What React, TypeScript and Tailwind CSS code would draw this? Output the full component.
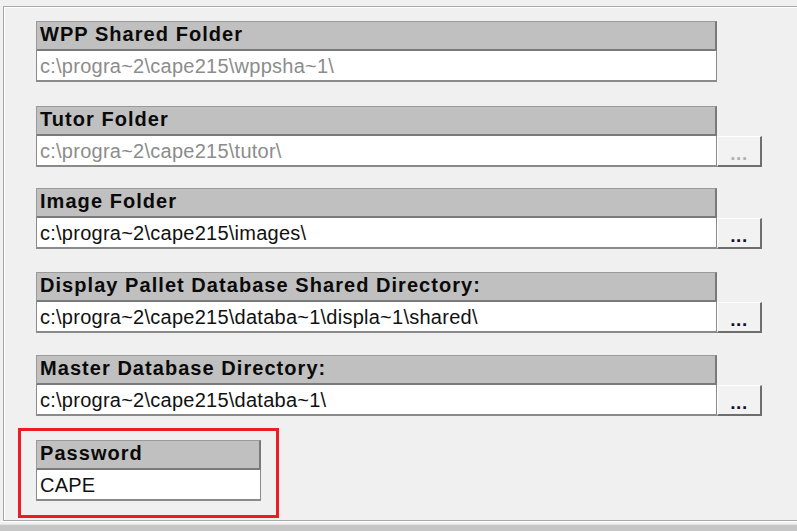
import React from 'react';

type Field = {
  label: string;
  value: string;
  disabled?: boolean;
  browse?: 'none' | 'on' | 'off';
  mt: string;
};

const fields: Field[] = [
  { label: 'WPP Shared Folder', value: 'c:\\progra~2\\cape215\\wppsha~1\\', disabled: true, browse: 'none', mt: 'mt-[13px]' },
  { label: 'Tutor Folder', value: 'c:\\progra~2\\cape215\\tutor\\', disabled: true, browse: 'off', mt: 'mt-[24px]' },
  { label: 'Image Folder', value: 'c:\\progra~2\\cape215\\images\\', browse: 'on', mt: 'mt-[21px]' },
  { label: 'Display Pallet Database Shared Directory:', value: 'c:\\progra~2\\cape215\\databa~1\\displa~1\\shared\\', browse: 'on', mt: 'mt-[23px]' },
  { label: 'Master Database Directory:', value: 'c:\\progra~2\\cape215\\databa~1\\', browse: 'on', mt: 'mt-[22px]' },
];

const Label: React.FC<{ text: string; width: string }> = ({ text, width }) => (
  <div
    className={`${width} h-[30px] flex items-center pl-[3px] pb-[3px] bg-[#c0c0c0] border-t border-l border-[#9a9a9a] border-r-2 border-b-2 border-r-[#7a7a7a] border-b-[#7a7a7a] text-[20px] font-bold tracking-[1.05px] text-[#0a0a0a] whitespace-nowrap`}
  >
    {text}
  </div>
);

const Input: React.FC<{ value: string; width: string; disabled?: boolean }> = ({ value, width, disabled }) => (
  <div
    className={`${width} h-[31px] flex items-center pl-[3px] bg-white border-l border-r border-b-2 border-[#8a8a8a] text-[20px] tracking-[0.25px] whitespace-nowrap ${
      disabled ? 'text-[#8c8c8c]' : 'text-[#111]'
    }`}
  >
    {value}
  </div>
);

const Browse: React.FC<{ enabled: boolean }> = ({ enabled }) => (
  <div className="w-[45px] h-[31px] flex items-center justify-center pt-[4px] bg-[#f2f2f2] border-t border-l border-white border-r-2 border-b-2 border-r-[#6e6e6e] border-b-[#6e6e6e]">
    <span className={`text-[19px] font-bold tracking-[0.5px] leading-none ${enabled ? 'text-[#101030]' : 'text-[#b0b0b0]'}`}>...</span>
  </div>
);

export default function App() {
  return (
    <div
      className="w-[797px] h-[531px] bg-[#f0f0f0] overflow-hidden flex flex-col"
      style={{ fontFamily: '"Liberation Sans", Arial, sans-serif' }}
    >
      <div className="h-[6px] shrink-0" />
      <div className="ml-[3px] h-[515px] shrink-0 border-t border-l border-b border-[#a8a8a8]">
        <div className="h-full border-t border-l border-white pl-[13px] flex flex-col">
          {fields.map((f) => (
            <div key={f.label} className={`${f.mt} ml-[18px] flex flex-col`}>
              <Label text={f.label} width="w-[681px]" />
              <div className="flex">
                <Input value={f.value} width="w-[681px]" disabled={f.disabled} />
                {f.browse !== 'none' && <Browse enabled={f.browse === 'on'} />}
              </div>
            </div>
          ))}

          <div className="mt-[12px] w-[261px] border-[3px] border-[#ed1c24] pt-[9px] pb-[14px] pl-[15px]">
            <Label text="Password" width="w-[225px]" />
            <Input value="CAPE" width="w-[225px]" />
          </div>
        </div>
      </div>
      <div className="h-px bg-white shrink-0" />
      <div className="h-[2px] shrink-0" />
      <div className="flex-1 bg-[#c6c6c6] border-t border-[#e2e2e2]" />
    </div>
  );
}
